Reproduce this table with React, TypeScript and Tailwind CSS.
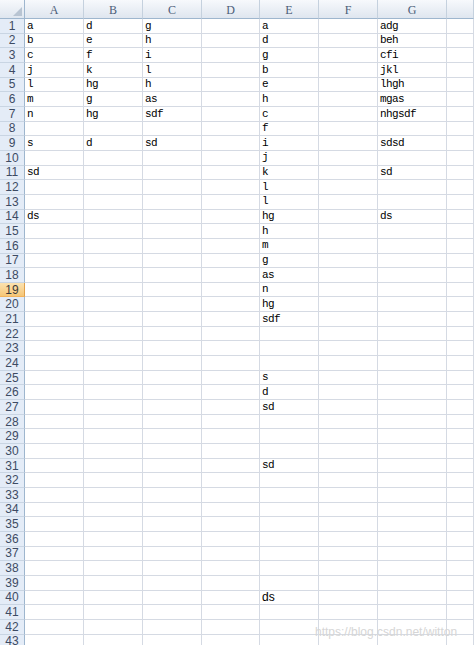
import React from 'react';

type ColKey = 'A' | 'B' | 'C' | 'D' | 'E' | 'F' | 'G' | 'H';

const columns: { key: ColKey; width: string; label: string }[] = [
  { key: 'A', width: 'w-[59px]', label: 'A' },
  { key: 'B', width: 'w-[59px]', label: 'B' },
  { key: 'C', width: 'w-[59px]', label: 'C' },
  { key: 'D', width: 'w-[58px]', label: 'D' },
  { key: 'E', width: 'w-[59px]', label: 'E' },
  { key: 'F', width: 'w-[59px]', label: 'F' },
  { key: 'G', width: 'w-[69px]', label: 'G' },
  { key: 'H', width: 'flex-1', label: '' },
];

const data: Record<number, Partial<Record<ColKey, string>>> = {
  1: { A: 'a', B: 'd', C: 'g', E: 'a', G: 'adg' },
  2: { A: 'b', B: 'e', C: 'h', E: 'd', G: 'beh' },
  3: { A: 'c', B: 'f', C: 'i', E: 'g', G: 'cfi' },
  4: { A: 'j', B: 'k', C: 'l', E: 'b', G: 'jkl' },
  5: { A: 'l', B: 'hg', C: 'h', E: 'e', G: 'lhgh' },
  6: { A: 'm', B: 'g', C: 'as', E: 'h', G: 'mgas' },
  7: { A: 'n', B: 'hg', C: 'sdf', E: 'c', G: 'nhgsdf' },
  8: { E: 'f' },
  9: { A: 's', B: 'd', C: 'sd', E: 'i', G: 'sdsd' },
  10: { E: 'j' },
  11: { A: 'sd', E: 'k', G: 'sd' },
  12: { E: 'l' },
  13: { E: 'l' },
  14: { A: 'ds', E: 'hg', G: 'ds' },
  15: { E: 'h' },
  16: { E: 'm' },
  17: { E: 'g' },
  18: { E: 'as' },
  19: { E: 'n' },
  20: { E: 'hg' },
  21: { E: 'sdf' },
  25: { E: 's' },
  26: { E: 'd' },
  27: { E: 'sd' },
  31: { E: 'sd' },
  40: { E: 'ds' },
};

const rowNumbers = Array.from({ length: 43 }, (_, i) => i + 1);
const selectedRow = 19;

const mono = { fontFamily: '"Liberation Mono", "DejaVu Sans Mono", monospace' };
const serif = { fontFamily: '"Liberation Serif", "DejaVu Serif", serif' };
const sansFont = { fontFamily: '"Liberation Sans", Arial, sans-serif' };

function HeaderRow() {
  return (
    <div className="flex h-[19px]">
      <div className="relative w-[25px] shrink-0 border-b border-r border-[#9eb6ce] bg-gradient-to-b from-[#f7f9fc] to-[#dfe6ef]">
        <svg className="absolute bottom-[2px] right-[2px]" width="9" height="9" viewBox="0 0 9 9">
          <polygon points="9,0 9,9 0,9" fill="#b8c4d2" />
        </svg>
      </div>
      {columns.map((c) => (
        <div
          key={c.key}
          className={`${c.width} flex shrink-0 items-center justify-center border-b border-r border-b-[#9eb6ce] border-r-[#c5d1de] bg-gradient-to-b from-[#f7f9fc] to-[#dfe6ef] pt-[1px] text-[12px] text-[#4b5d78]`}
          style={serif}
        >
          {c.label}
        </div>
      ))}
    </div>
  );
}

function DataRow({ n }: { n: number }) {
  const row = data[n] ?? {};
  const selected = n === selectedRow;
  return (
    <div className="flex h-[14.67px]">
      <div
        className={`flex w-[25px] shrink-0 items-center justify-center border-b border-r text-[12px] leading-none ${
          selected
            ? 'border-b-[#f2b25b] border-r-[#e0a04a] bg-gradient-to-b from-[#fbe2b0] to-[#f6c676] text-[#3a3a3a]'
            : 'border-b-[#c9d5e3] border-r-[#9eb6ce] bg-[#e4ecf7] text-[#3d4b63]'
        }`}
        style={sansFont}
      >
        {n}
      </div>
      {columns.map((c) => {
        const value = row[c.key];
        const sans = n === 40 && c.key === 'E';
        return (
          <div
            key={c.key}
            className={`${c.width} flex shrink-0 items-center overflow-hidden whitespace-nowrap border-b border-r border-[#d5dae3] pl-[2px] text-black ${
              sans ? 'text-[12px]' : 'text-[11px] tracking-[-0.6px]'
            }`}
            style={sans ? sansFont : mono}
          >
            {value}
          </div>
        );
      })}
    </div>
  );
}

export default function App() {
  return (
    <div className="relative h-[645px] w-[474px] overflow-hidden bg-white">
      <HeaderRow />
      {rowNumbers.map((n) => (
        <DataRow key={n} n={n} />
      ))}
      <div className="absolute left-[315px] top-[623px] text-[12px] text-[#d6d6d6]" style={sansFont}>
        https://blog.csdn.net/witton
      </div>
    </div>
  );
}
